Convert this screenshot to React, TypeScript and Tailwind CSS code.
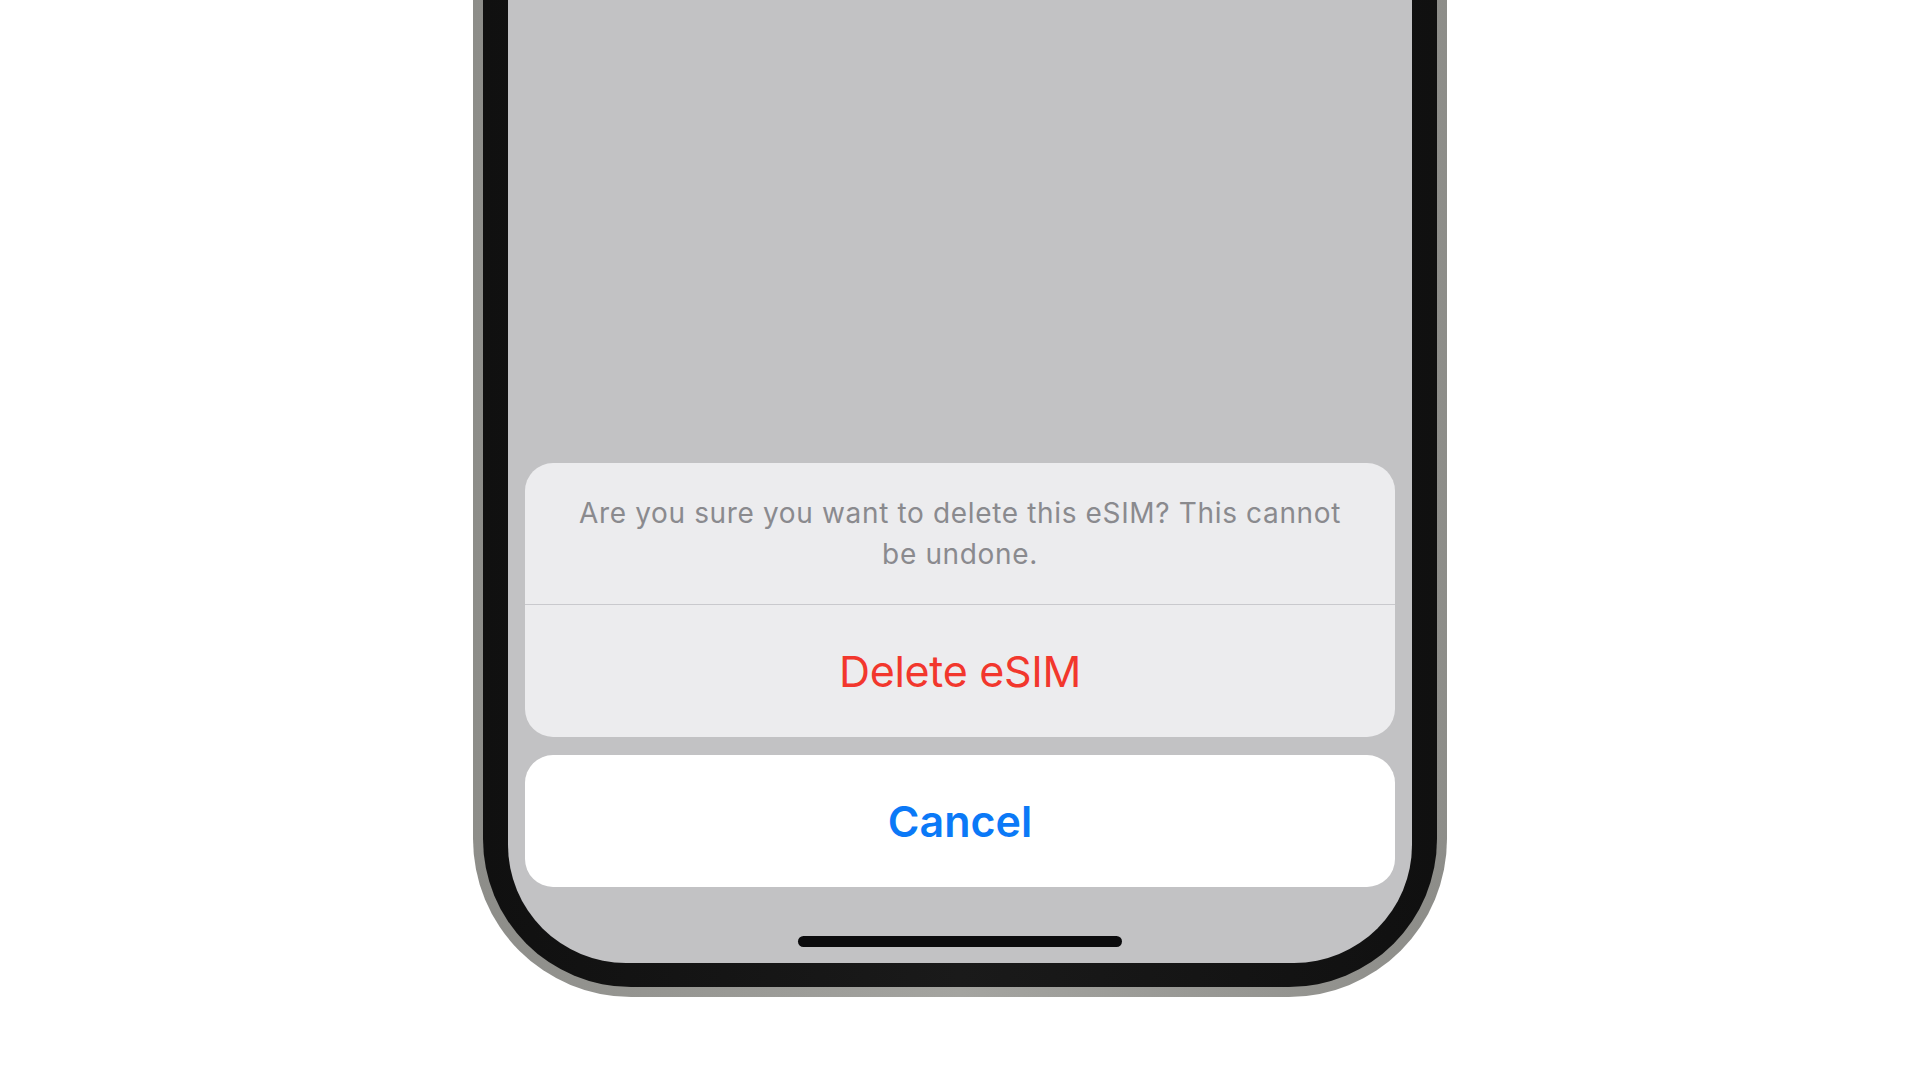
import React from "react";

const font = { fontFamily: "Inter, 'Noto Sans', sans-serif" };

const HomeIndicator = () => (
  <div className="flex justify-center pt-[49px] pb-[16px]">
    <div className="h-[11px] w-[324px] rounded-full bg-[#0b0b0d]" />
  </div>
);

const ActionSheet = () => (
  <div className="flex flex-col gap-[18px] px-[17px]" style={font}>
    <div className="overflow-hidden rounded-[28px] bg-[#ececee]">
      <div className="flex h-[141px] items-center justify-center px-[42px] text-center">
        <p className="text-[28px] leading-[41px] tracking-[0.65px] text-[#8a8a8e]">
          Are you sure you want to delete this eSIM? This cannot be undone.
        </p>
      </div>
      <div className="h-px bg-[#c9c9cd]" />
      <button className="flex h-[132px] w-full items-center justify-center text-[43px] tracking-[-0.3px] text-[#f2372d]">
        Delete eSIM
      </button>
    </div>
    <button className="flex h-[132px] w-full items-center justify-center rounded-[28px] bg-white text-[43px] font-semibold text-[#0b79f7]">
      Cancel
    </button>
  </div>
);

export default function App() {
  return (
    <div className="flex h-[1080px] w-full justify-center overflow-hidden bg-white">
      {/* phone frame: metal rim, black bezel, screen */}
      <div className="h-[997px] w-[974px] rounded-b-[158px] bg-gradient-to-r from-[#8d8d89] via-[#a4a4a0] to-[#8d8d89] px-[10px] pb-[10px]">
        <div className="h-full w-full rounded-b-[148px] bg-gradient-to-r from-[#101010] via-[#1a1a1a] to-[#101010] px-[25px] pb-[24px]">
          <div className="flex h-full w-full flex-col justify-end overflow-hidden rounded-b-[118px] bg-[#c2c2c4]">
            <ActionSheet />
            <HomeIndicator />
          </div>
        </div>
      </div>
    </div>
  );
}
